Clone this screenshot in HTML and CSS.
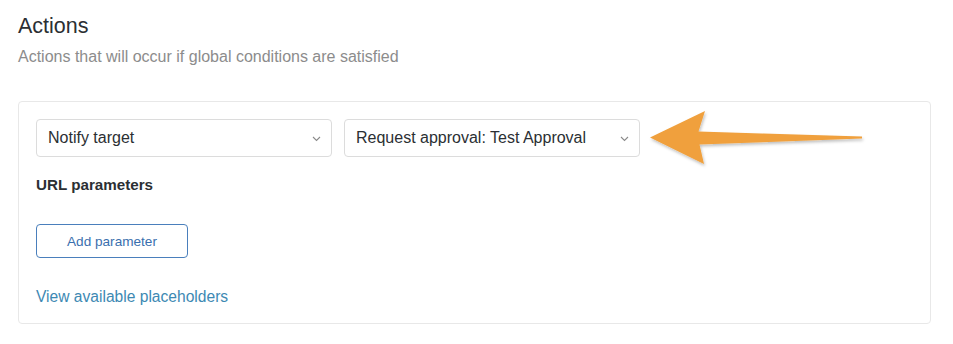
FILE: index.html
```html
<!DOCTYPE html>
<html>
<head>
<meta charset="utf-8">
<link rel="stylesheet" href="styles.css">
</head>
<body>
<div class="page">
  <h2 class="title">Actions</h2>
  <p class="subtitle">Actions that will occur if global conditions are satisfied</p>
  <div class="card">
    <div class="selects">
      <div class="select">
        <span>Notify target</span>
        <svg class="chev" width="9" height="6" viewBox="0 0 9 6"><path d="M1 1 L4.5 4.5 L8 1" fill="none" stroke="#8a8a8a" stroke-width="1.1"/></svg>
      </div>
      <div class="select">
        <span>Request approval: Test Approval</span>
        <svg class="chev" width="9" height="6" viewBox="0 0 9 6"><path d="M1 1 L4.5 4.5 L8 1" fill="none" stroke="#8a8a8a" stroke-width="1.1"/></svg>
      </div>
    </div>
    <div class="label">URL parameters</div>
    <button class="btn">Add parameter</button>
    <a class="link" href="#">View available placeholders</a>
  </div>
  <svg class="arrow" width="230" height="70" viewBox="640 105 230 70">
    <defs>
      <filter id="sh" x="-10%" y="-20%" width="120%" height="150%">
        <feDropShadow dx="1" dy="2" stdDeviation="1.5" flood-color="#000" flood-opacity="0.25"/>
      </filter>
    </defs>
    <polygon filter="url(#sh)" fill="#f0a03c" points="650,137.5 705,111 698.5,131.5 862,136.5 862,138.5 699.5,144.5 704,164"/>
  </svg>
</div>
</body>
</html>
```
FILE: styles.css
```css
* { box-sizing: border-box; }
html, body { margin: 0; padding: 0; background: #fff; }
body { font-family: "Liberation Sans", Arial, sans-serif; color: #2b2f33; }
.page { position: relative; padding: 12px 22px 0 18px; }
.title { margin: 0; font-size: 21.5px; font-weight: 400; line-height: 28px; color: #2b2f33; }
.subtitle { margin: 7px 0 0; font-size: 16px; line-height: 20px; color: #8c8c8c; }
.card { margin-top: 34px; border: 1px solid #e8e8e8; border-radius: 4px; padding: 17px 17px 0 17px; width: 913px; height: 223px; }
.selects { display: flex; gap: 12px; }
.select { width: 296px; height: 38px; border: 1px solid #dcdcdc; border-radius: 4px; display: flex; align-items: center; justify-content: space-between; padding: 0 10px 0 11px; font-size: 16px; color: #2b2f33; }
.chev { margin-top: 1px; }
.label { margin-top: 19px; font-size: 15.2px; font-weight: 700; line-height: 18px; color: #2b2f33; }
.btn { display: block; margin-top: 30px; width: 152px; height: 34px; border: 1px solid #4a7fbc; border-radius: 4px; background: #fff; color: #3a6fae; font-family: inherit; font-size: 13.6px; padding: 0; }
.link { display: inline-block; margin-top: 29px; font-size: 15.6px; line-height: 20px; color: #3d89b3; text-decoration: none; }
.arrow { position: absolute; left: 640px; top: 105px; }
```
